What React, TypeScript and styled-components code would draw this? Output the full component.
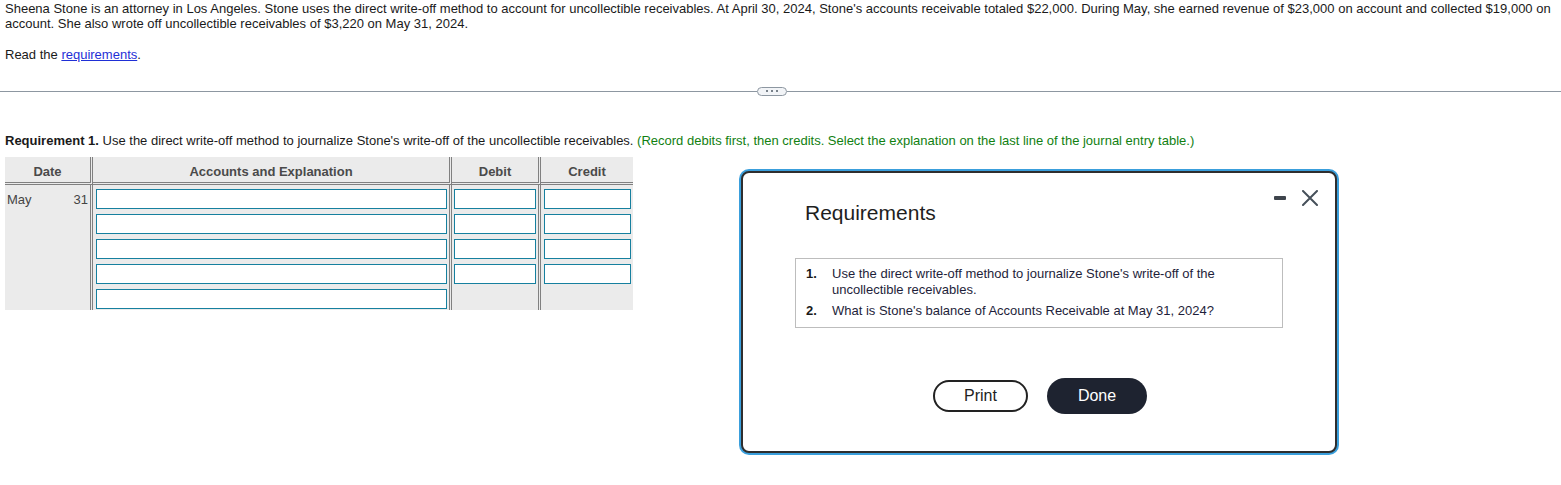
import React from "react";
import styled, { createGlobalStyle } from "styled-components";

const Global = createGlobalStyle`
  html, body { margin: 0; padding: 0; background: #fff; }
  body { font-family: "Liberation Sans", Arial, sans-serif; font-size: 13px; color: #1a1a1a; }
  * { box-sizing: border-box; }
`;

const Page = styled.div`
  position: relative;
  width: 1561px;
  height: 485px;
  overflow: hidden;
`;

const Intro = styled.div`
  padding: 1px 3px 0 5px;
`;

const Para = styled.p<{ $gap?: number }>`
  margin: ${(p) => p.$gap ?? 0}px 0 0;
  line-height: 15px;
`;

const Link = styled.a`
  color: #1f2fd6;
  text-decoration: underline;
`;

const Divider = styled.div`
  display: grid;
  grid-template-columns: 757px 30px 1fr;
  align-items: center;
  height: 10px;
  margin-top: 24px;
`;

const Rule = styled.div`
  height: 1px;
  background: #8d97a1;
`;

const Pill = styled.div`
  height: 9px;
  border: 1px solid #8d97a1;
  border-radius: 5px;
  background: #f2f4f7;
  display: flex;
  align-items: center;
  justify-content: center;
  gap: 3px;
`;

const Dot = styled.span`
  width: 2px;
  height: 2px;
  border-radius: 50%;
  background: #4f5b66;
`;

const Section = styled.div`
  padding-left: 5px;
  margin-top: 37px;
`;

const ReqLine = styled.div`
  line-height: 16px;
`;

const Green = styled.span`
  color: #118011;
`;

const Table = styled.div`
  width: 628px;
  margin-top: 8px;
  background: #ebebeb;
`;

const Row = styled.div`
  display: grid;
  grid-template-columns: 88px 359px 89px 92px;
`;

const HeadCell = styled.div<{ $last?: boolean }>`
  height: 28px;
  padding-top: 4px;
  line-height: 21px;
  text-align: center;
  font-weight: bold;
  color: #4a4a4a;
  border-bottom: 3px double #808080;
  border-right: ${(p) => (p.$last ? "none" : "3px double #808080")};
`;

const BodyCol = styled.div<{ $last?: boolean; $pl: number; $pr: number }>`
  display: flex;
  flex-direction: column;
  gap: 5px;
  padding: 4px ${(p) => p.$pr}px 1px ${(p) => p.$pl}px;
  border-right: ${(p) => (p.$last ? "none" : "3px double #808080")};
`;

const DateCell = styled.div`
  display: flex;
  justify-content: space-between;
  line-height: 20px;
  padding: 1px 2px 0 2px;
  color: #444;
`;

const Input = styled.div`
  height: 20px;
  background: #fff;
  border: 1px solid #16809f;
`;

const Modal = styled.div`
  position: absolute;
  left: 741px;
  top: 171px;
  width: 596px;
  height: 282px;
  border: 2px solid #2e2e2e;
  border-radius: 8px;
  box-shadow: 0 0 0 2px #3a9fdc;
  background: #fff;
  display: flex;
  flex-direction: column;
  padding: 28px 0 0 52px;
`;

const Controls = styled.div`
  position: absolute;
  top: 17px;
  right: 17px;
  display: flex;
  align-items: center;
  gap: 16px;
`;

const Minimize = styled.div`
  width: 12px;
  height: 4px;
  border-radius: 1px;
  background: #3f454d;
`;

const Title = styled.h2`
  margin: 0 0 0 10px;
  font-size: 21px;
  line-height: 24px;
  font-weight: normal;
  color: #1e1e1e;
`;

const ListBox = styled.ol`
  list-style: none;
  margin: 33px 0 0;
  width: 488px;
  border: 1px solid #bdbdbd;
  padding: 7px 10px 8px 10px;
  display: flex;
  flex-direction: column;
  gap: 5px;
`;

const Item = styled.li`
  display: grid;
  grid-template-columns: 26px 1fr;
  line-height: 16px;
  color: #1e1e3a;
`;

const Num = styled.span`
  font-weight: bold;
  color: #1a1a1a;
`;

const Buttons = styled.div`
  display: flex;
  align-items: center;
  gap: 19px;
  margin: 50px 0 0 138px;
`;

const Button = styled.button<{ $primary?: boolean }>`
  font-family: "Liberation Sans", Arial, sans-serif;
  font-size: 16px;
  cursor: pointer;
  width: ${(p) => (p.$primary ? 100 : 95)}px;
  height: ${(p) => (p.$primary ? 36 : 32)}px;
  border-radius: 18px;
  border: ${(p) => (p.$primary ? "none" : "2px solid #222")};
  background: ${(p) => (p.$primary ? "#1e2330" : "#fff")};
  color: ${(p) => (p.$primary ? "#fff" : "#222")};
  padding: 0;
`;

export default function App() {
  const rows = [0, 1, 2, 3];
  return (
    <Page>
      <Global />
      <Intro>
        <Para>
          Sheena Stone is an attorney in Los Angeles. Stone uses the direct write-off method to account for uncollectible
          receivables. At April 30, 2024, Stone's accounts receivable totaled $22,000. During May, she earned revenue of
          $23,000 on account and collected $19,000 on account. She also wrote off uncollectible receivables of $3,220 on
          May 31, 2024.
        </Para>
        <Para $gap={16}>
          Read the <Link href="#">requirements</Link>.
        </Para>
      </Intro>
      <Divider>
        <Rule />
        <Pill>
          <Dot />
          <Dot />
          <Dot />
        </Pill>
        <Rule />
      </Divider>
      <Section>
        <ReqLine>
          <b>Requirement 1.</b> Use the direct write-off method to journalize Stone's write-off of the uncollectible
          receivables.{" "}
          <Green>
            (Record debits first, then credits. Select the explanation on the last line of the journal entry table.)
          </Green>
        </ReqLine>
        <Table>
          <Row>
            <HeadCell>Date</HeadCell>
            <HeadCell>Accounts and Explanation</HeadCell>
            <HeadCell>Debit</HeadCell>
            <HeadCell $last>Credit</HeadCell>
          </Row>
          <Row>
            <BodyCol $pl={0} $pr={0}>
              <DateCell>
                <span>May</span>
                <span>31</span>
              </DateCell>
            </BodyCol>
            <BodyCol $pl={3} $pr={2}>
              {[0, 1, 2, 3, 4].map((i) => (
                <Input key={i} />
              ))}
            </BodyCol>
            <BodyCol $pl={2} $pr={2}>
              {rows.map((i) => (
                <Input key={i} />
              ))}
            </BodyCol>
            <BodyCol $pl={3} $pr={2} $last>
              {rows.map((i) => (
                <Input key={i} />
              ))}
            </BodyCol>
          </Row>
        </Table>
      </Section>

      <Modal>
        <Controls>
          <Minimize />
          <svg width="16" height="16" viewBox="0 0 16 16">
            <path d="M1 1 L15 15 M15 1 L1 15" stroke="#46505a" strokeWidth="2" strokeLinecap="round" />
          </svg>
        </Controls>
        <Title>Requirements</Title>
        <ListBox>
          <Item>
            <Num>1.</Num>
            <span>Use the direct write-off method to journalize Stone's write-off of the uncollectible receivables.</span>
          </Item>
          <Item>
            <Num>2.</Num>
            <span>What is Stone's balance of Accounts Receivable at May 31, 2024?</span>
          </Item>
        </ListBox>
        <Buttons>
          <Button>Print</Button>
          <Button $primary>Done</Button>
        </Buttons>
      </Modal>
    </Page>
  );
}
